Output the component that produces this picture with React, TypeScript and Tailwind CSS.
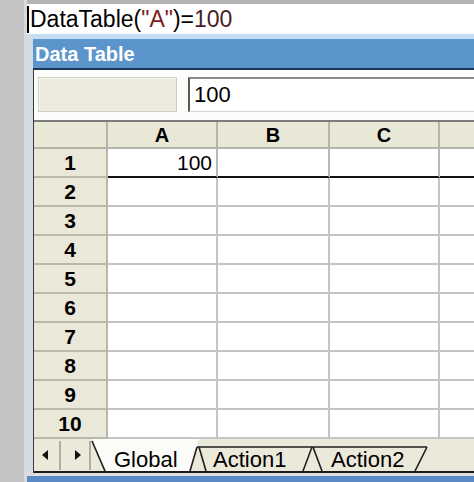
import React from 'react';

const columns = ['A', 'B', 'C', ''];
const rows = [1, 2, 3, 4, 5, 6, 7, 8, 9, 10];

const TabOutlines: React.FC = () => (
  <svg className="pointer-events-none absolute inset-0" width="440" height="32" viewBox="0 0 440 32">
    <polygon points="58,0 71,32 156,32 165,0" fill="#fbfbf7" />
    <line x1="26" y1="2" x2="26" y2="31" stroke="#9a9a90" strokeWidth="1.5" />
    <line x1="56" y1="2" x2="56" y2="31" stroke="#9a9a90" strokeWidth="1.5" />
    <polygon points="8,16 14,11 14,21" fill="#111" />
    <polygon points="41,11 41,21 47,16" fill="#111" />
    <g stroke="#1c1c1c" strokeWidth="1.6" fill="none">
      <line x1="58" y1="2" x2="71" y2="32" />
      <line x1="156" y1="32" x2="163" y2="8" />
      <line x1="165" y1="8" x2="172" y2="32" />
      <line x1="269" y1="32" x2="278" y2="8" />
      <line x1="279" y1="8" x2="288" y2="32" />
      <line x1="381" y1="32" x2="393" y2="8" />
      <line x1="163" y1="8" x2="393" y2="8" />
    </g>
  </svg>
);

const App: React.FC = () => {
  return (
    <div className="flex h-[482px] w-[474px] overflow-hidden bg-white font-['Liberation_Sans',Arial,sans-serif] text-black">
      {/* left gutter */}
      <div className="w-[27px] shrink-0 border-r-[3px] border-[#d9d9d9] bg-[#c4c4c4]" />

      <div className="flex min-w-0 flex-1 flex-col">
        <div className="h-[4px] bg-[#b3b3b3]" />

        {/* script line */}
        <div className="flex h-[30px] items-center text-[23px] leading-none">
          <span className="mr-[1px] h-[27px] w-[2px] bg-black" />
          <span>DataTable(</span>
          <span className="text-[#7a1c1c]">"A"</span>
          <span>)=</span>
          <span className="text-[#4a1e1e]">100</span>
        </div>

        <div className="flex min-h-0 flex-1">
          <div className="w-[6px] shrink-0 bg-[#d3dce6]" />

          {/* Data Table window */}
          <div className="flex min-w-0 flex-1 flex-col">
            <div className="flex h-[36px] items-center border-t-[5px] border-b-2 border-t-[#c3def3] border-b-[#1d3857] bg-[#5b95cb] pl-[2px] text-[20px] font-bold leading-none text-white">
              Data Table
            </div>

            <div className="flex min-h-0 flex-1 flex-col border-l border-[#3a3a3a]">
              {/* formula bar */}
              <div className="flex h-[50px] bg-[#fcfcfa] pt-[7px] pl-[4px]">
                <div className="h-[35px] w-[139px] border border-[#cfcdc0] bg-[#eceadd] shadow-[inset_1px_1px_0_#f8f8f2]" />
                <div className="ml-[11px] flex h-[35px] flex-1 items-center border-t-2 border-l-2 border-b border-t-[#8a8a8a] border-l-[#5a5a5a] border-b-[#d4d4d4] bg-white pl-[4px] text-[22px] leading-none">
                  100
                </div>
              </div>

              {/* grid */}
              <div className="border-t-2 border-[#7c7c7c]">
                <div className="grid grid-cols-[74px_110px_112px_110px_110px]">
                  <div className="h-[27px] border-r-2 border-b-2 border-[#b4b4a8] bg-[#e9e8d6]" />
                  {columns.map((c, i) => (
                    <div
                      key={i}
                      className="flex h-[27px] items-center justify-center border-r-2 border-b-2 border-[#b4b4a8] bg-[#e9e8d6] text-[20px] font-bold leading-none"
                    >
                      {c}
                    </div>
                  ))}
                  {rows.map((r) => (
                    <React.Fragment key={r}>
                      <div className="flex h-[29px] items-center justify-center border-r-2 border-b-2 border-[#b8b8ac] bg-[#eae9d9] text-[21px] font-bold leading-none">
                        {r}
                      </div>
                      {columns.map((c, i) => (
                        <div
                          key={i}
                          className={
                            r === 1
                              ? 'flex h-[29px] items-center justify-end border-r-2 border-b-2 border-r-[#b8b8b8] border-b-[#111] bg-white pr-[4px] text-[21px] leading-none'
                              : 'h-[29px] border-r-2 border-b-2 border-[#c4c4c4] bg-white'
                          }
                        >
                          {r === 1 && c === 'A' ? '100' : ''}
                        </div>
                      ))}
                    </React.Fragment>
                  ))}
                </div>

                {/* sheet tabs */}
                <div className="relative flex h-[34px] border-b-2 border-[#1a1a1a] bg-[#ebe9da] text-[22px] leading-none">
                  <TabOutlines />
                  <div className="w-[58px] shrink-0" />
                  <div className="relative flex w-[106px] shrink-0 items-center pt-[9px] pl-[22px]">Global</div>
                  <div className="relative flex w-[114px] shrink-0 items-center pt-[9px] pl-[15px]">Action1</div>
                  <div className="relative flex w-[114px] shrink-0 items-center pt-[9px] pl-[19px]">Action2</div>
                </div>
              </div>
            </div>
          </div>
        </div>

        {/* bottom edge */}
        <div className="h-[9px] shrink-0 border-t-[3px] border-[#dedede] bg-[#5b89c6]" />
      </div>
    </div>
  );
};

export default App;
